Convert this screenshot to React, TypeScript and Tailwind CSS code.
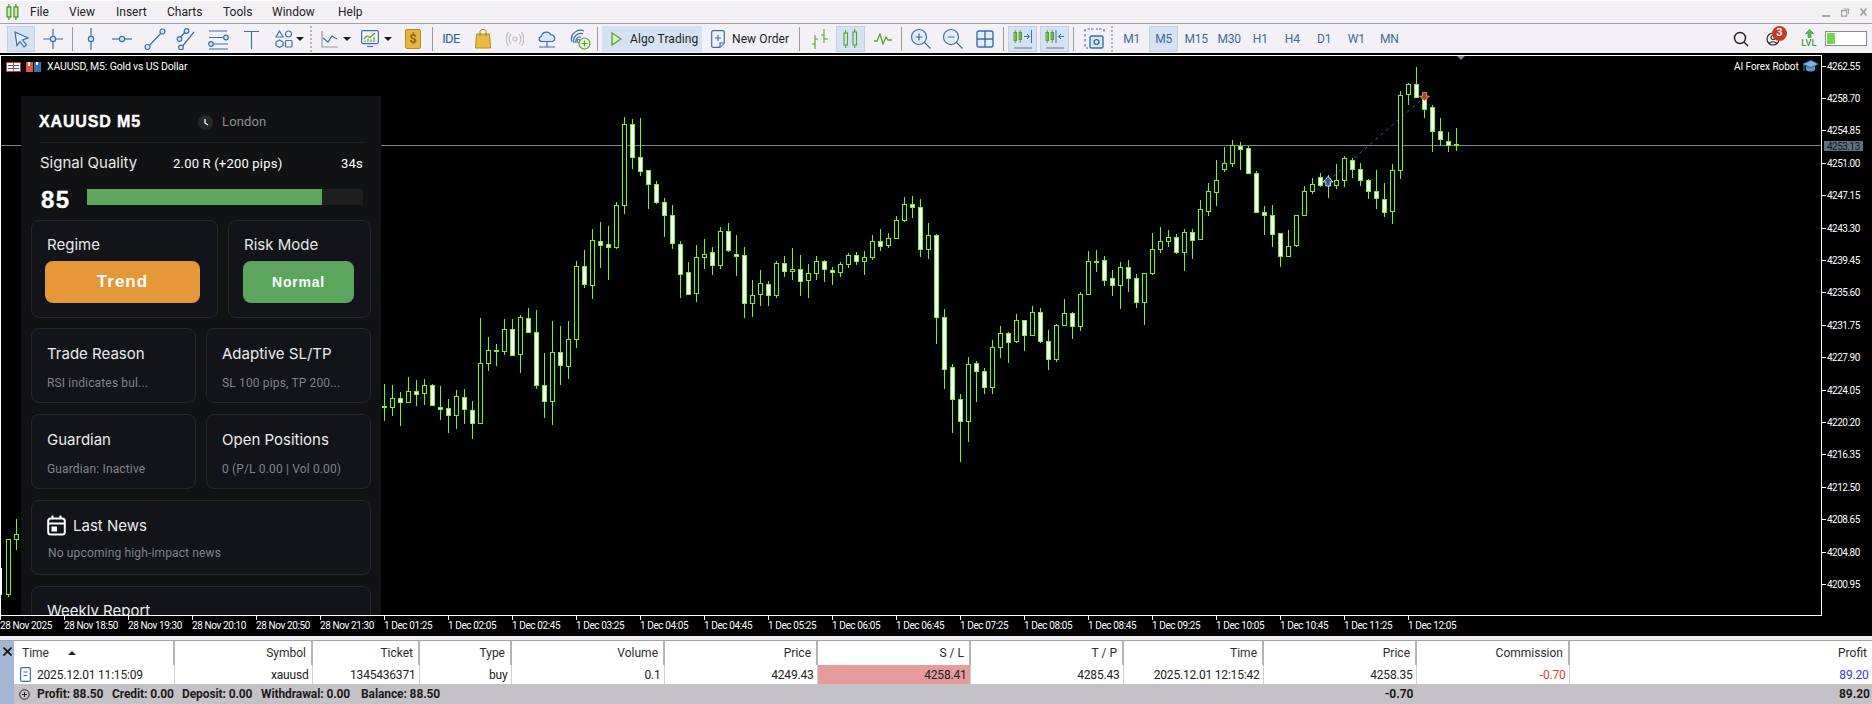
import type { ReactNode } from 'react';

const BLUE = '#3b6fb1';
const GREEN = '#5aa02c';
const CANDLE = '#74f52a';

type Row = number[];

// candle rows: high, body top, body bottom, low, white body. values are in 3x crop coords
const seg = (start: number, oy: number, rows: Row[]) =>
  rows.map((r, i) => ({
    i: start + i,
    hi: oy + r[0] / 3,
    top: oy + r[1] / 3,
    bot: oy + r[2] / 3,
    lo: oy + r[3] / 3,
    white: r[4] === 1,
  }));

const CANDLES = [
  ...seg(-47, 320, [[658, 658, 822, 832, 0], [598, 643, 658, 690, 0]]),
  ...seg(0, 120, [
    [793, 858, 862, 902, 1], [796, 835, 862, 888, 0], [816, 835, 848, 917, 1], [771, 814, 848, 848, 0],
    [781, 813, 821, 857, 1], [778, 796, 821, 855, 0], [793, 796, 857, 857, 1], [797, 862, 869, 900, 1],
    [837, 865, 887, 938, 1], [811, 829, 887, 926, 0], [807, 832, 869, 912, 1], [843, 871, 911, 957, 1],
    [594, 730, 911, 911, 0], [652, 691, 731, 752, 0], [672, 691, 695, 737, 1], [598, 628, 695, 705, 0],
    [598, 628, 705, 709, 1], [585, 592, 704, 759, 0], [565, 595, 638, 640, 1], [571, 637, 797, 806, 1],
    [700, 796, 845, 893, 1], [603, 697, 845, 914, 0], [618, 697, 735, 795, 1], [603, 658, 740, 777, 0],
    [424, 439, 658, 684, 0], [390, 439, 494, 503, 1], [327, 361, 497, 537, 0], [306, 362, 374, 444, 1],
    [317, 373, 383, 480, 1], [247, 256, 383, 387, 0],
  ]),
  ...seg(30, 100, [
    [52, 73, 317, 342, 0], [57, 73, 173, 207, 1], [54, 172, 215, 228, 1], [211, 211, 254, 326, 1],
    [243, 253, 308, 312, 1], [294, 307, 347, 411, 1], [316, 346, 431, 447, 1], [424, 431, 521, 594, 1],
    [486, 517, 584, 584, 1], [435, 472, 581, 606, 0], [417, 463, 472, 507, 0], [441, 457, 497, 525, 1],
    [381, 394, 497, 507, 0], [370, 394, 452, 456, 1], [405, 463, 470, 528, 1], [441, 466, 611, 654, 1],
    [541, 586, 611, 651, 0], [511, 550, 584, 618, 0], [544, 553, 587, 618, 1], [484, 490, 587, 594, 0],
  ]),
  ...seg(50, 180, [
    [228, 250, 275, 291, 1], [205, 268, 274, 300, 0], [225, 268, 305, 348, 1], [252, 280, 302, 354, 0],
    [228, 244, 281, 300, 0], [240, 244, 269, 306, 1], [262, 271, 277, 315, 1], [247, 253, 278, 291, 0],
    [220, 226, 254, 264, 0], [216, 226, 245, 255, 1], [213, 232, 245, 285, 0], [166, 184, 233, 240, 0],
    [148, 184, 200, 213, 1], [159, 175, 197, 204, 0], [109, 121, 176, 177, 0], [52, 73, 122, 126, 0],
    [48, 73, 83, 114, 1], [57, 82, 209, 231, 1], [129, 166, 209, 237, 0], [162, 166, 413, 492, 1],
    [388, 412, 569, 627, 1], [552, 562, 659, 759, 1], [642, 658, 725, 846, 1], [531, 553, 725, 786, 0],
    [544, 550, 575, 666, 1], [565, 574, 623, 642, 1], [480, 502, 623, 642, 0], [438, 460, 503, 534, 0],
    [457, 460, 488, 549, 1], [403, 421, 485, 489, 0], [421, 421, 467, 513, 1], [378, 397, 467, 467, 0],
    [385, 397, 485, 489, 1], [450, 484, 539, 570, 1], [432, 436, 539, 546, 0], [358, 400, 437, 437, 0],
    [397, 400, 440, 477, 1], [337, 343, 440, 453, 0], [213, 244, 344, 344, 0], [210, 244, 245, 276, 0],
    [228, 241, 302, 318, 1], [270, 295, 317, 348, 1], [247, 262, 317, 387, 0], [240, 262, 296, 336, 1],
    [282, 295, 368, 384, 1], [280, 280, 368, 435, 0], [159, 208, 281, 285, 0], [141, 184, 208, 219, 0],
    [150, 172, 185, 201, 0], [163, 172, 218, 222, 1], [148, 157, 218, 273, 0], [148, 157, 182, 237, 1],
    [60, 88, 179, 179, 0], [10, 34, 95, 108, 0], [-60, 0, 35, 78, 0],
  ]),
  ...seg(105, 120, [[82, 130, 149, 155, 0], [60, 76, 131, 140, 0]]),
  ...seg(107, 50, [
    [277, 287, 295, 360, 1], [287, 295, 371, 371, 1], [362, 370, 487, 487, 1], [468, 487, 497, 555, 1],
    [465, 496, 553, 590, 1], [548, 549, 617, 652, 1], [540, 587, 617, 620, 0], [496, 496, 587, 590, 0],
    [408, 424, 496, 496, 0], [383, 403, 423, 432, 0], [370, 380, 403, 411, 1], [375, 385, 406, 443, 1],
    [342, 391, 406, 418, 0], [318, 325, 391, 410, 0], [325, 331, 358, 384, 1], [339, 358, 391, 407, 1],
    [388, 391, 424, 446, 1], [360, 424, 445, 476, 1], [400, 446, 485, 501, 1], [342, 361, 485, 521, 0],
    [123, 136, 361, 387, 0], [99, 103, 134, 165, 0], [51, 103, 143, 143, 1], [135, 143, 176, 204, 1],
    [166, 172, 244, 306, 1], [205, 244, 268, 287, 1], [246, 273, 285, 305, 1], [234, 283, 287, 303, 1],
  ]),
];

const PRICES = ['4262.55', '4258.70', '4254.85', '4251.00', '4247.15', '4243.30', '4239.45', '4235.60', '4231.75', '4227.90', '4224.05', '4220.20', '4216.35', '4212.50', '4208.65', '4204.80', '4200.95'];

const TIMES = ['28 Nov 2025', '28 Nov 18:50', '28 Nov 19:30', '28 Nov 20:10', '28 Nov 20:50', '28 Nov 21:30', '1 Dec 01:25', '1 Dec 02:05', '1 Dec 02:45', '1 Dec 03:25', '1 Dec 04:05', '1 Dec 04:45', '1 Dec 05:25', '1 Dec 06:05', '1 Dec 06:45', '1 Dec 07:25', '1 Dec 08:05', '1 Dec 08:45', '1 Dec 09:25', '1 Dec 10:05', '1 Dec 10:45', '1 Dec 11:25', '1 Dec 12:05'];

const Icon = ({ size = 22, children, box = 22 }: { size?: number; box?: number; children: ReactNode }) => (
  <svg width={size} height={size} viewBox={`0 0 ${box} ${box}`} fill="none" stroke={BLUE} strokeWidth={1.2}>
    {children}
  </svg>
);

const Slot = ({ w, active, children }: { w: string; active?: boolean; children: ReactNode }) => (
  <div className={`${w} h-[26px] shrink-0 flex items-center justify-center ${active ? 'bg-[#d4e2f3] shadow-[inset_0_0_0_1px_#c2d2e6]' : ''}`}>
    {children}
  </div>
);

const Sep = ({ className = '' }: { className?: string }) => <div className={`w-[1px] h-[24px] shrink-0 bg-[#9a9a9a] ${className}`} />;
const Dotted = ({ w }: { w: string }) => (
  <div className={`${w} h-[26px] shrink-0 flex justify-center`}>
    <div className="h-full border-l-2 border-dotted border-[#b5b5b5]" />
  </div>
);
const Caret = () => <div className="w-0 h-0 border-x-[4px] border-x-transparent border-t-[4px] border-t-[#1a1a1a] shrink-0" />;

const Node = ({ x, y, r = 2.3 }: { x: number; y: number; r?: number }) => <circle cx={x} cy={y} r={r} fill="#dbe6f4" />;

const TF = ({ w, label, active }: { w: string; label: string; active?: boolean }) => (
  <Slot w={w} active={active}>
    <span className="text-[12px] tracking-[-0.2px] text-[#41699c]">{label}</span>
  </Slot>
);

const ShiftIcon = ({ arrow }: { arrow: string }) => (
  <svg width="20" height="22" viewBox="0 0 20 22" fill="none" strokeWidth="1">
    <g stroke={GREEN}>
      <rect x="1" y="4.5" width="2.5" height="8" fill="#b9dc9b" />
      <path d="M2.2 2V15" />
      <rect x="6" y="4.5" width="2.5" height="7" fill="#b9dc9b" />
      <path d="M7.2 2V15" />
    </g>
    <path d={arrow} stroke={BLUE} />
    <path d="M1 20H19" stroke="#8f9aa8" strokeWidth="1.5" />
  </svg>
);

const Toolbar = () => (
  <div className="h-[29px] flex items-center pl-[5px] pr-[5px] bg-[#f3f1f5]">
    <div className="w-[32px] flex justify-center shrink-0">
      <Slot w="w-[28px]" active>
        <Icon size={18} box={18}>
          <path d="M3 2 L16 8 L10.5 10 L14.5 15 L12 17 L8 11.5 L5 15.5 Z" fill="#e4edf8" />
        </Icon>
      </Slot>
    </div>
    <Slot w="w-[32px]">
      <Icon><path d="M1 11H21M11 1V21" /><Node x={11} y={11} r={2.6} /></Icon>
    </Slot>
    <Sep className="mx-[2.5px]" />
    <Slot w="w-[32px]"><Icon><path d="M11 0V22" /><Node x={11} y={11} r={2.6} /></Icon></Slot>
    <Slot w="w-[32px]"><Icon><path d="M0 11H20" /><Node x={10} y={11} r={2.6} /></Icon></Slot>
    <Slot w="w-[32px]"><Icon><path d="M4 19L18 4" /><Node x={3.5} y={19} r={2.5} /><Node x={18.5} y={3.5} r={2.5} /></Icon></Slot>
    <Slot w="w-[32px]"><Icon><path d="M5 20L18 4M2 12L10 3" /><Node x={3.5} y={11} r={2.3} /><Node x={10.5} y={3} r={2.3} /><Node x={5} y={19.5} r={2.3} /></Icon></Slot>
    <Slot w="w-[32px]"><Icon><path d="M1 3H19M1 9.5H15M6 16H20M1 21H20" /><Node x={18} y={9.5} r={2.3} /><Node x={3} y={16} r={2.3} /></Icon></Slot>
    <Slot w="w-[32px]"><Icon><path d="M4 3.5H19M11.5 3.5V21" /></Icon></Slot>
    <div className="w-[40px] h-[26px] shrink-0 flex items-center pl-[8px] gap-[3px]">
      <Icon size={18} box={18}>
        <path d="M4.5 1 L8 7 H1 Z" /><circle cx={13.5} cy={4} r={3} /><path d="M4.5 10 L8 12 V15.5 L4.5 17.5 L1 15.5 V12 Z" /><rect x={10.5} y={10.5} width={6.5} height={6.5} rx={1} />
      </Icon>
      <Caret />
    </div>
    <Dotted w="w-[8px]" />
    <div className="w-[44px] h-[26px] shrink-0 flex items-center pl-[6px] gap-[4px]">
      <Icon size={18} box={18}>
        <path d="M1 1V17H17" stroke="#9a9a9a" /><path d="M2 8L7 12L11 6L16 9" />
      </Icon>
      <Caret />
    </div>
    <div className="w-[33px] h-[26px] shrink-0 flex items-center pl-[2px] gap-[5px]">
      <Icon size={18} box={18}>
        <rect x={0.6} y={0.6} width={16.8} height={13} rx={1.5} />
        <path d="M6 16.5H12" />
        <path d="M2.5 9L6 6L9 7.5L14 3" stroke={GREEN} />
        <path d="M4 12V10.5M7 12V9M10 12V9.5M13 12V7" stroke={GREEN} />
      </Icon>
      <Caret />
    </div>
    <div className="w-[38px] h-[26px] shrink-0 flex items-center pl-[13px]">
      <div className="w-[16px] h-[20px] rounded-[2px] bg-[#e8b53c] border border-[#b98a25] flex items-center justify-center text-[13px] font-bold text-[#8a6414]">$</div>
    </div>
    <Sep className="mx-[1.5px]" />
    <Slot w="w-[34px]"><span className="text-[13px] tracking-[-0.6px] text-[#2f5f9e]">IDE</span></Slot>
    <Slot w="w-[30px]">
      <svg width="16" height="21" viewBox="0 0 16 21" fill="none">
        <path d="M1.5 6H14.5L15.5 20H0.5Z" fill="#e8bb45" stroke="#b98a25" />
        <path d="M5 8V3.5C5 1 11 1 11 3.5V8" stroke="#9c7a2a" />
      </svg>
    </Slot>
    <Slot w="w-[34px]">
      <svg width="18" height="16" viewBox="0 0 18 16" fill="none" stroke="#bdbdbd" strokeWidth="1.2">
        <circle cx="9" cy="8" r="2" />
        <path d="M5 3C2.5 5.5 2.5 10.5 5 13M13 3C15.5 5.5 15.5 10.5 13 13" />
        <path d="M2.5 1C-0.5 5 -0.5 11 2.5 15M15.5 1C18.5 5 18.5 11 15.5 15" />
      </svg>
    </Slot>
    <Slot w="w-[30px]">
      <Icon size={20} box={20}>
        <path d="M5 12.5C1.5 12.5 1 8 4.5 7.3C5 2.5 12 1.5 13.8 5.8C18 5.3 19.5 12 15 12.5Z" fill="#dbe6f4" />
        <path d="M10 13V18M2 18H18" />
      </Icon>
    </Slot>
    <Slot w="w-[35px]">
      <Icon size={22} box={22}>
        <path d="M3 14C0 6 9 0 15 3M5 15C3 9 9 4 14 6M7 15C6 11 9 8 12 9" />
        <circle cx={9.5} cy={13} r={1.5} />
        <circle cx={15.5} cy={15.5} r={5.5} fill="#e6f3dd" stroke={GREEN} />
        <path d="M15.5 12.5V18.5M12.5 15.5H18.5" stroke={GREEN} />
      </Icon>
    </Slot>
    <Sep />
    <div className="ml-[4px] w-[100px] h-[26px] shrink-0 bg-[#d4e2f3] flex items-center pl-[9px] gap-[8px]">
      <svg width="11" height="14" viewBox="0 0 11 14" fill="#d8efc8" stroke={GREEN} strokeWidth="1.3"><path d="M1 1L10 7L1 13Z" /></svg>
      <span className="text-[12px] text-[#222] whitespace-nowrap tracking-[0.1px]">Algo Trading</span>
    </div>
    <div className="ml-[9px] flex items-center gap-[7px] shrink-0">
      <svg width="14" height="18" viewBox="0 0 14 18" fill="none" stroke={BLUE} strokeWidth="1.2">
        <path d="M2 0.7H12C12.7 0.7 13.3 1.3 13.3 2V13L9 17.3H2C1.3 17.3 0.7 16.7 0.7 16V2C0.7 1.3 1.3 0.7 2 0.7Z" />
        <path d="M7 5V11M4 8H10" />
        <path d="M9 17V13H13" fill="#dbe6f4" />
      </svg>
      <span className="text-[12px] text-[#222] whitespace-nowrap tracking-[0.1px]">New Order</span>
    </div>
    <Sep className="ml-[10px]" />
    <div className="ml-[4px]">
      <Slot w="w-[32px]">
        <svg width="18" height="20" viewBox="0 0 18 20" fill="none" stroke={GREEN} strokeWidth="1.1"><path d="M4 6V20M1 15H4M4 10H7M13 0V14M10 6H13M13 10H17" /></svg>
      </Slot>
    </div>
    <Slot w="w-[29px]" active>
      <svg width="15" height="20" viewBox="0 0 15 20" fill="none" stroke={GREEN} strokeWidth="1.1"><rect x="1" y="4" width="3.5" height="12" /><path d="M2.7 1V4M2.7 16V19" /><rect x="10" y="3" width="3.5" height="13" /><path d="M11.7 0V3M11.7 16V19" /></svg>
    </Slot>
    <Slot w="w-[36px]">
      <svg width="18" height="12" viewBox="0 0 18 12" fill="none" stroke={GREEN} strokeWidth="1.3"><path d="M0 8H3L6 1L9 11L12 4L14 7H18" /></svg>
    </Slot>
    <Sep />
    <div className="ml-[3px]">
      <Slot w="w-[32px]">
        <Icon><circle cx={9} cy={9} r={7.5} fill="#e4edf8" /><path d="M9 5.5V12.5M5.5 9H12.5M14.5 14.5L20.5 20.5" /></Icon>
      </Slot>
    </div>
    <Slot w="w-[32px]">
      <Icon><circle cx={9} cy={9} r={7.5} fill="#e4edf8" /><path d="M5.5 9H12.5M14.5 14.5L20.5 20.5" /></Icon>
    </Slot>
    <Slot w="w-[32px]">
      <Icon size={18} box={18}><rect x={1} y={1} width={16} height={16} rx={2} fill="#e4edf8" strokeWidth={1.4} /><path d="M9 1V17M1 9H17" strokeWidth={1.4} /></Icon>
    </Slot>
    <Sep className="ml-[2px]" />
    <div className="ml-[4px]">
      <Slot w="w-[29px]" active><ShiftIcon arrow="M11 8.5H16M14 6L16.5 8.5L14 11M18.5 2V15" /></Slot>
    </div>
    <div className="ml-[3px]">
      <Slot w="w-[29px]" active><ShiftIcon arrow="M11 2V15M13.5 8.5H19M16 6L13.5 8.5L16 11" /></Slot>
    </div>
    <Sep className="ml-[4px]" />
    <div className="ml-[4px]">
      <Slot w="w-[32px]">
        <Icon size={21} box={21}>
          <path d="M6 1H1V14M15 1H20V6" strokeDasharray="2.5 2.5" />
          <path d="M1 16V20H4" strokeDasharray="2.5 2.5" />
          <path d="M7 1H14" strokeDasharray="2.5 2.5" />
          <rect x={6} y={8} width={13} height={12} rx={1.5} fill="#dbe6f4" strokeWidth={1.4} />
          <circle cx={12.5} cy={14} r={2.4} strokeWidth={1.4} />
        </Icon>
      </Slot>
    </div>
    <Dotted w="w-[4px]" />
    <TF w="w-[35px]" label="M1" />
    <TF w="w-[29px]" label="M5" active />
    <TF w="w-[36px]" label="M15" />
    <TF w="w-[30px]" label="M30" />
    <TF w="w-[32px]" label="H1" />
    <TF w="w-[32px]" label="H4" />
    <TF w="w-[32px]" label="D1" />
    <TF w="w-[32px]" label="W1" />
    <TF w="w-[34px]" label="MN" />
    <div className="ml-auto flex items-center">
      <Slot w="w-[32px]">
        <svg width="16" height="16" viewBox="0 0 16 16" fill="none" stroke="#1c1c1c" strokeWidth="1.4"><circle cx="7" cy="7" r="5.5" /><path d="M11 11L15 15" /></svg>
      </Slot>
      <div className="w-[32px] h-[26px] relative flex items-center justify-center">
        <svg width="14" height="16" viewBox="0 0 14 16" fill="none" stroke="#2a2a2a" strokeWidth="1.2"><circle cx="7" cy="8" r="6" /><circle cx="7" cy="6.5" r="2" /><path d="M3 13C4 10 10 10 11 13" /></svg>
        <div className="absolute left-[15px] top-[0px] w-[15px] h-[15px] rounded-full bg-[#c93a25] text-white text-[11px] font-bold flex items-center justify-center">3</div>
      </div>
      <div className="ml-[4px] w-[32px] flex flex-col items-center leading-none">
        <svg width="9" height="9" viewBox="0 0 9 9" fill="#5cb85c" stroke="#3f9a3f" strokeWidth="0.7"><path d="M4.5 0.5L8.5 4.5H6V8.5H3V4.5H0.5Z" /></svg>
        <span className="text-[9px] text-[#3f9a3f] font-medium tracking-[0.2px] mt-[1px]">LVL</span>
      </div>
      <div className="w-[42px] h-[15px] border border-[#8c8c8c] bg-white p-[1px]">
        <div className="w-[8px] h-full bg-[#76d34f]" />
      </div>
    </div>
  </div>
);

const MenuBar = () => (
  <div className="h-[23px] flex items-center bg-[#f3f1f5] border-b border-[#a2a2a2] relative">
    <div className="w-[30px] pl-[6px] shrink-0">
      <svg width="13" height="16" viewBox="0 0 13 16" fill="#cfe8b5" stroke="#4f9a28" strokeWidth="1.3"><rect x="1" y="3" width="3.8" height="10" /><path d="M2.9 0V3M2.9 13V16" /><rect x="8" y="3" width="3.8" height="10" /><path d="M9.9 0V3M9.9 13V16" /></svg>
    </div>
    <span className="text-[12px] text-[#222] w-[39px]">File</span>
    <span className="text-[12px] text-[#222] w-[47px]">View</span>
    <span className="text-[12px] text-[#222] w-[51px]">Insert</span>
    <span className="text-[12px] text-[#222] w-[56px]">Charts</span>
    <span className="text-[12px] text-[#222] w-[49px]">Tools</span>
    <span className="text-[12px] text-[#222] w-[66px]">Window</span>
    <span className="text-[12px] text-[#222]">Help</span>
    <div className="ml-auto flex items-center gap-[11px] pr-[5px] text-[#9b9b9b]">
      <div className="w-[8px] h-[2px] bg-[#a8a8a8] mt-[7px]" />
      <svg width="8" height="9" viewBox="0 0 8 9" fill="none" stroke="#a0a0a0" strokeWidth="1.2"><rect x="0.6" y="2.6" width="5" height="5.5" /><path d="M2.5 1H7.4V6" /></svg>
      <svg width="7" height="8" viewBox="0 0 7 8" fill="none" stroke="#a0a0a0" strokeWidth="1.6"><path d="M0.5 0.5L6.5 7.5M6.5 0.5L0.5 7.5" /></svg>
    </div>
  </div>
);

const ChartSvg = () => (
  <svg width="1872" height="583" viewBox="0 53 1872 583" className="block font-[family-name:Roboto]" shapeRendering="crispEdges">
    <rect x="0" y="53" width="1872" height="583" fill="#000" />
    <rect x="0" y="55" width="1821" height="560" fill="none" stroke="#fff" strokeWidth="1" transform="translate(0.5 0.5)" />
    <rect x="1" y="145" width="1820" height="1" fill="#7d828b" />

    <path d="M1328 181L1424.5 97" stroke="#3f64c8" strokeDasharray="3 4" shapeRendering="auto" />
    {CANDLES.map((c) => {
      const cx = 384 + 8 * c.i;
      return (
        <g key={c.i}>
          <rect x={cx} y={Math.max(c.hi, 56)} width="1" height={c.lo - Math.max(c.hi, 56)} fill={CANDLE} />
          <rect x={cx - 1.5} y={Math.round(c.top) + 0.5} width="4" height={Math.max(Math.round(c.bot - c.top), 1)} fill={c.white ? '#fff' : '#000'} stroke={CANDLE} strokeWidth="1" />
        </g>
      );
    })}
    <rect x="0" y="568" width="2" height="27" fill="#fff" />
    <g shapeRendering="auto">
      <path d="M1328 176.5L1333 182H1330.2V186H1325.8V182H1323Z" fill="#2b55a8" stroke="#fff" strokeWidth="0.8" />
      <path d="M1424.5 101L1429.5 96H1426.5V92.5H1422.5V96H1419.5Z" fill="#c83a22" stroke="#e9d6d0" strokeWidth="0.6" />
      <path d="M1457 56H1465L1461 60Z" fill="#7e8894" />
    </g>

    {/* header */}
    <g>
      <rect x="6.5" y="62.5" width="14" height="9" fill="#fff" stroke="#c7402d" />
      <path d="M8 65.5H19M8 68.5H19" stroke="#2f5ea8" fill="none" />
      <rect x="13" y="62" width="1" height="10" fill="#c7402d" />
      <rect x="26" y="62" width="6.5" height="10" fill="#d9573f" />
      <rect x="34" y="62" width="6.5" height="10" fill="#3c70b5" />
      <rect x="28" y="62" width="2" height="4" fill="#fff" />
      <rect x="36" y="62" width="2" height="3" fill="#fff" />
    </g>
    <g shapeRendering="auto" fill="#fff" fontSize="10.5" letterSpacing="-0.15">
      <text x="47" y="70">XAUUSD, M5:  Gold vs US Dollar</text>
      <text x="1734" y="70" fontSize="10" letterSpacing="-0.05">AI Forex Robot</text>
    </g>
    <g shapeRendering="auto">
      <path d="M1803 64L1811 60.5L1818 64L1811 67.5Z" fill="#7fb2e6" stroke="#4d86c6" strokeWidth="0.8" />
      <path d="M1806 66V70C1808 72 1813 72 1815 70V66L1811 68Z" fill="#5c94d4" />
      <rect x="1803.5" y="64" width="1" height="7" fill="#4d86c6" />
    </g>

    {/* price axis */}
    {PRICES.map((p, i) => {
      const y = Math.round(65.5 + 32.4 * i);
      return (
        <g key={p}>
          <rect x="1822" y={y} width="4" height="1" fill="#fff" />
          <text x="1827" y={y + 4} fill="#fff" fontSize="10" letterSpacing="-0.5" shapeRendering="auto">{p}</text>
        </g>
      );
    })}
    <rect x="1824" y="141" width="39" height="10" fill="#5f7283" />
    <text x="1827" y="149.5" fill="#10161c" fontSize="10" letterSpacing="-0.5" shapeRendering="auto">4253.13</text>

    {/* time axis */}
    {TIMES.map((t, i) => (
      <g key={t}>
        <rect x={i * 64} y="616" width="1" height="4" fill="#fff" />
        <text x={i * 64} y="628.5" fill="#fff" fontSize="10" letterSpacing="-0.4" shapeRendering="auto">{t}</text>
      </g>
    ))}
  </svg>
);

const Card = ({ className, children }: { className?: string; children: ReactNode }) => (
  <div className={`rounded-[8px] border border-[#24262a] bg-[#12141a] shrink-0 ${className ?? ''}`}>{children}</div>
);

const InfoCard = ({ title, sub, w }: { title: string; sub: string; w: string }) => (
  <Card className={`${w} h-[75px] pl-[15px] pt-[15px]`}>
    <div className="font-[family-name:Inter] text-[15px] leading-[20px] text-[#ebebeb]">{title}</div>
    <div className="mt-[11px] text-[12px] leading-[16px] tracking-[0.15px] text-[#7f838a] whitespace-nowrap">{sub}</div>
  </Card>
);

const Panel = () => (
  <div className="absolute left-[21px] top-[43px] w-[360px] h-[519px] overflow-hidden bg-[#111213] flex flex-col items-center">
    <div className="w-[324px] h-[47px] pt-[6px] border-b border-[#1f2022] flex items-center shrink-0">
      <span className="font-[family-name:'Liberation_Sans'] font-bold text-[16px] tracking-[0.85px] text-white [-webkit-text-stroke:0.4px_#fff] w-[159px] shrink-0">XAUUSD M5</span>
      <span className="w-[15px] h-[15px] rounded-full bg-[#26272a] flex items-center justify-center shrink-0">
        <svg width="9" height="9" viewBox="0 0 9 9" fill="none" stroke="#fff" strokeWidth="1.3"><path d="M4 1V5L7 7" /></svg>
      </span>
      <span className="ml-[9px] text-[13px] tracking-[0.15px] text-[#8d9095]">London</span>
    </div>
    <div className="w-[324px] h-[41px] flex items-center shrink-0 pl-[1px]">
      <span className="font-[family-name:Inter] text-[15px] text-[#e7e7e7] w-[133px] shrink-0">Signal Quality</span>
      <span className="text-[13px] tracking-[0.2px] text-white">2.00 R (+200 pips)</span>
      <span className="ml-auto text-[13px] tracking-[0.2px] text-white">34s</span>
    </div>
    <div className="w-[324px] h-[24px] flex items-center shrink-0 pl-[2px] mt-[1px]">
      <span className="mt-[5px] font-[family-name:'Liberation_Sans'] font-bold text-[24px] leading-none tracking-[1.5px] text-white [-webkit-text-stroke:0.3px_#fff] w-[46px] shrink-0">85</span>
      <div className="w-[276px] h-[16px] bg-[#1e1e1e]">
        <div className="w-[235px] h-[16px] bg-[#5ba55c]" />
      </div>
    </div>
    <div className="w-[340px] flex justify-between mt-[11px] shrink-0">
      <Card className="w-[187px] h-[98px] pl-[13px] pt-[14px]">
        <div className="pl-[2px] font-[family-name:Inter] text-[15px] leading-[20px] text-[#e8e8e8]">Regime</div>
        <div className="mt-[6px] w-[155px] h-[42px] rounded-[8px] bg-[#e69737] flex items-center justify-center font-[family-name:'Liberation_Sans'] font-bold text-[17px] tracking-[1px] text-white">Trend</div>
      </Card>
      <Card className="w-[143px] h-[98px] pl-[14px] pt-[14px]">
        <div className="pl-[1px] font-[family-name:Inter] text-[15px] leading-[20px] text-[#e8e8e8]">Risk Mode</div>
        <div className="mt-[6px] w-[111px] h-[42px] rounded-[8px] bg-[#5ba55c] flex items-center justify-center font-[family-name:'Liberation_Sans'] font-bold text-[14px] tracking-[0.8px] text-white">Normal</div>
      </Card>
    </div>
    <div className="w-[340px] flex justify-between mt-[10px] shrink-0">
      <InfoCard w="w-[165px]" title="Trade Reason" sub="RSI indicates bul..." />
      <InfoCard w="w-[165px]" title="Adaptive SL/TP" sub="SL 100 pips, TP 200..." />
    </div>
    <div className="w-[340px] flex justify-between mt-[11px] shrink-0">
      <InfoCard w="w-[165px]" title="Guardian" sub="Guardian: Inactive" />
      <InfoCard w="w-[165px]" title="Open Positions" sub="0 (P/L 0.00 | Vol 0.00)" />
    </div>
    <Card className="w-[340px] h-[75px] mt-[11px] pl-[15px] pt-[14px]">
      <div className="flex items-center gap-[7px]">
        <svg width="19" height="21" viewBox="0 0 19 21" fill="none" stroke="#fff" strokeWidth="2"><rect x="1.2" y="3.5" width="16.6" height="16" rx="2.5" /><path d="M1.2 8.5H17.8M5.5 0.5V4M13.5 0.5V4" /><rect x="5" y="12" width="4.5" height="4" fill="#fff" strokeWidth="1" /></svg>
        <span className="font-[family-name:Inter] text-[15px] leading-[20px] text-[#ebebeb]">Last News</span>
      </div>
      <div className="mt-[9px] pl-[1px] text-[12px] leading-[16px] tracking-[0.15px] text-[#7f838a]">No upcoming high-impact news</div>
    </Card>
    <Card className="w-[340px] h-[75px] mt-[11px] pl-[15px] pt-[14px]">
      <div className="font-[family-name:Inter] text-[15px] leading-[20px] text-[#ebebeb]">Weekly Report</div>
    </Card>
  </div>
);

const GRID = 'grid grid-cols-[161px_138px_107px_92px_153px_153px_153px_153px_140px_153px_153px_302px]';

const HEADERS = ['Symbol', 'Ticket', 'Type', 'Volume', 'Price', 'S / L', 'T / P', 'Time', 'Price', 'Commission', 'Profit'];
const VALUES = ['xauusd', '1345436371', 'buy', '0.1', '4249.43', '4258.41', '4285.43', '2025.12.01 12:15:42', '4258.35', '-0.70', '89.20'];

const Positions = () => (
  <div className="h-[68px] flex flex-col bg-[#f3f1f5] pt-[4px] font-[family-name:Roboto]">
    <div className="flex-1 flex border-t border-[#a5a3a9]">
      <div className="w-[14px] shrink-0 bg-[#a3b6d4] flex justify-center pt-[6px]">
        <svg width="9" height="9" viewBox="0 0 9 9" stroke="#111" strokeWidth="1.6"><path d="M0.5 0.5L8.5 8.5M8.5 0.5L0.5 8.5" /></svg>
      </div>
      <div className="flex-1 flex flex-col">
        <div className={`${GRID} h-[24px] bg-white`}>
          <div className="flex items-center pl-[8px] border-r-2 border-[#b4b4b4] text-[12px] text-[#2b2b2b]">
            Time
            <div className="ml-[19px] w-0 h-0 border-x-[4px] border-x-transparent border-b-[4px] border-b-[#222]" />
          </div>
          {HEADERS.map((h, i) => (
            <div key={i} className={`flex items-center justify-end pr-[5px] text-[12px] text-[#2b2b2b] ${i === 10 ? '' : 'border-r-2 border-[#b4b4b4]'}`}>{h}</div>
          ))}
        </div>
        <div className={`${GRID} h-[19px] bg-white`}>
          <div className="flex items-center pl-[6px] gap-[6px] border-r border-[#cfcfcf] text-[12px] tracking-[-0.2px] text-[#222]">
            <svg width="11" height="15" viewBox="0 0 11 15" fill="none" stroke="#3f6fa8" strokeWidth="1.2"><rect x="0.6" y="0.6" width="9.8" height="13.8" rx="1.5" /><path d="M3.5 5H7.5M3.5 8.5H7.5" /></svg>
            2025.12.01 11:15:09
          </div>
          {VALUES.map((v, i) => (
            <div
              key={i}
              className={`flex items-center justify-end pr-[3.5px] text-[12px] tracking-[-0.2px] ${i === 10 ? '' : 'border-r border-[#cfcfcf]'} ${i === 5 ? 'bg-[#e79c9c]' : ''} ${i === 9 ? 'text-[#e03a22]' : i === 10 ? 'text-[#3535f0]' : 'text-[#222]'}`}
            >
              {v}
            </div>
          ))}
        </div>
        <div className={`${GRID} flex-1 bg-[#c4c2c6] text-[12px] font-bold text-[#1c1c1c]`}>
          <div className="col-span-10 flex items-center pl-[5px] relative">
            <svg width="11" height="11" viewBox="0 0 11 11" fill="none" stroke="#222" strokeWidth="1"><circle cx="5.5" cy="5.5" r="4.8" /><path d="M5.5 3V8M3 5.5H8" /></svg>
            <span className="ml-[7px] w-[75px] tracking-[-0.1px]">Profit: 88.50</span>
            <span className="w-[70px] tracking-[-0.1px]">Credit: 0.00</span>
            <span className="w-[79px] tracking-[-0.1px]">Deposit: 0.00</span>
            <span className="w-[100px] tracking-[-0.1px]">Withdrawal: 0.00</span>
            <span className="tracking-[-0.1px]">Balance: 88.50</span>
            <span className="ml-auto pr-[3.5px]">-0.70</span>
          </div>
          <div className="flex items-center justify-end pr-[2px] col-span-2">89.20</div>
        </div>
      </div>
    </div>
  </div>
);

export default function App() {
  return (
    <div className="w-[1872px] h-[704px] overflow-hidden bg-black font-[family-name:Roboto]">
      <div className="h-[1px] bg-white" />
      <MenuBar />
      <Toolbar />
      <div className="relative h-[583px] overflow-hidden">
        <ChartSvg />
        <Panel />
      </div>
      <Positions />
    </div>
  );
}
